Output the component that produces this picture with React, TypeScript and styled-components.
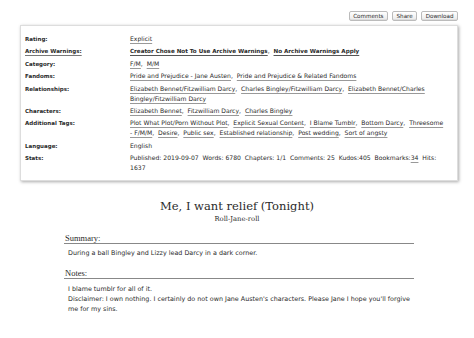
import React from "react";
import styled, { createGlobalStyle } from "styled-components";

const Global = createGlobalStyle`
  html, body { margin: 0; padding: 0; background: #fff; }
  body { font-family: "DejaVu Sans", "Liberation Sans", sans-serif; color: #2a2a2a; }
`;

const Page = styled.div`
  width: 474px;
  height: 338px;
  overflow: hidden;
  display: flex;
  flex-direction: column;
`;

const Actions = styled.div`
  display: flex;
  justify-content: flex-end;
  gap: 4px;
  padding: 11px 16px 0 0;
`;

const Button = styled.button`
  font-family: "DejaVu Sans", sans-serif;
  font-size: 5.6px;
  color: #2a2a2a;
  height: 10px;
  padding: 0 3.5px;
  border: 1px solid #bbb;
  border-radius: 2px;
  background: linear-gradient(#fff 2%, #ececec 90%, #d8d8d8 100%);
  box-shadow: inset 0 -1px 0 #ddd;
  line-height: 8px;
`;

const MetaBox = styled.div`
  margin: 4px 16px 0 20px;
  border: 1px solid #ddd;
  box-shadow: 1px 1px 3px #aaa;
  padding: 8px 11px 7px 4px;
  display: grid;
  grid-template-columns: 105px 1fr;
  row-gap: 2.4px;
  font-size: 6.1px;
  line-height: 10px;
`;

const Label = styled.div<{ $link?: boolean }>`
  font-weight: bold;
  font-size: 5.5px;
  ${(p) => (p.$link ? "text-decoration: underline; text-decoration-color: #777; text-underline-offset: 1.5px;" : "")}
`;

const Value = styled.div``;

const Tag = styled.span<{ $strong?: boolean }>`
  font-weight: ${(p) => (p.$strong ? "bold" : "normal")};
  font-size: ${(p) => (p.$strong ? "5.6px" : "inherit")};
  text-decoration: underline;
  text-decoration-color: ${(p) => (p.$strong ? "#555" : "#999")};
  text-underline-offset: 1.5px;
`;

const Sep = styled.span`
  white-space: pre-wrap;
`;

const Heading = styled.header`
  display: flex;
  flex-direction: column;
  align-items: center;
  margin-top: 18px;
`;

const Title = styled.h2`
  margin: 0;
  font-family: "DejaVu Serif", "Liberation Serif", serif;
  font-weight: normal;
  font-size: 11.5px;
  line-height: 14px;
  color: #2a2a2a;
`;

const Byline = styled.div`
  margin: 1px 0 0;
  font-family: "DejaVu Serif", "Liberation Serif", serif;
  font-weight: normal;
  font-size: 6.8px;
  line-height: 10px;
  color: #2a2a2a;
`;

const Module = styled.div<{ $gap: number }>`
  margin: ${(p) => p.$gap}px 60px 0 64px;
  display: flex;
  flex-direction: column;
`;

const ModuleTitle = styled.h3`
  margin: 0;
  font-family: "Liberation Serif", serif;
  font-weight: normal;
  font-size: 8.5px;
  line-height: 9px;
  padding-left: 1px;
  border-bottom: 1px solid #888;
  color: #2a2a2a;
`;

const ModuleText = styled.div<{ $gap: number }>`
  margin: ${(p) => p.$gap}px 0 0;
  padding: 0 4px 0 4px;
  font-size: 6.4px;
  line-height: 10px;
`;

const tagList = (tags: string[], strong = false) =>
  tags.map((t, i) => (
    <React.Fragment key={t}>
      <Tag $strong={strong}>{t}</Tag>
      {i < tags.length - 1 ? <Sep>,  </Sep> : null}
    </React.Fragment>
  ));

export default function App() {
  return (
    <Page>
      <Global />
      <Actions>
        <Button>Comments</Button>
        <Button>Share</Button>
        <Button>Download</Button>
      </Actions>
      <MetaBox>
        <Label>Rating:</Label>
        <Value>{tagList(["Explicit"])}</Value>
        <Label $link>Archive Warnings:</Label>
        <Value>{tagList(["Creator Chose Not To Use Archive Warnings", "No Archive Warnings Apply"], true)}</Value>
        <Label>Category:</Label>
        <Value>{tagList(["F/M", "M/M"])}</Value>
        <Label>Fandoms:</Label>
        <Value>{tagList(["Pride and Prejudice - Jane Austen", "Pride and Prejudice & Related Fandoms"])}</Value>
        <Label>Relationships:</Label>
        <Value>
          {tagList([
            "Elizabeth Bennet/Fitzwilliam Darcy",
            "Charles Bingley/Fitzwilliam Darcy",
            "Elizabeth Bennet/Charles Bingley/Fitzwilliam Darcy",
          ])}
        </Value>
        <Label>Characters:</Label>
        <Value>{tagList(["Elizabeth Bennet", "Fitzwilliam Darcy", "Charles Bingley"])}</Value>
        <Label>Additional Tags:</Label>
        <Value>
          {tagList([
            "Plot What Plot/Porn Without Plot",
            "Explicit Sexual Content",
            "I Blame Tumblr",
            "Bottom Darcy",
            "Threesome - F/M/M",
            "Desire",
            "Public sex",
            "Established relationship",
            "Post wedding",
            "Sort of angsty",
          ])}
        </Value>
        <Label>Language:</Label>
        <Value>English</Value>
        <Label>Stats:</Label>
        <Value>
          <Sep>Published: 2019-09-07  Words: 6780  Chapters: 1/1  Comments: 25  Kudos:405  Bookmarks:</Sep>
          <Tag>34</Tag>
          <Sep>  Hits: </Sep>1637
        </Value>
      </MetaBox>
      <Heading>
        <Title>Me, I want relief (Tonight)</Title>
        <Byline>Roll-Jane-roll</Byline>
      </Heading>
      <Module $gap={10}>
        <ModuleTitle>Summary:</ModuleTitle>
        <ModuleText $gap={4}>During a ball Bingley and Lizzy lead Darcy in a dark corner.</ModuleText>
      </Module>
      <Module $gap={11}>
        <ModuleTitle>Notes:</ModuleTitle>
        <ModuleText $gap={5}>
          I blame tumblr for all of it.
          <br />
          Disclaimer: I own nothing. I certainly do not own Jane Austen's characters. Please Jane I hope you'll forgive
          me for my sins.
        </ModuleText>
      </Module>
    </Page>
  );
}
